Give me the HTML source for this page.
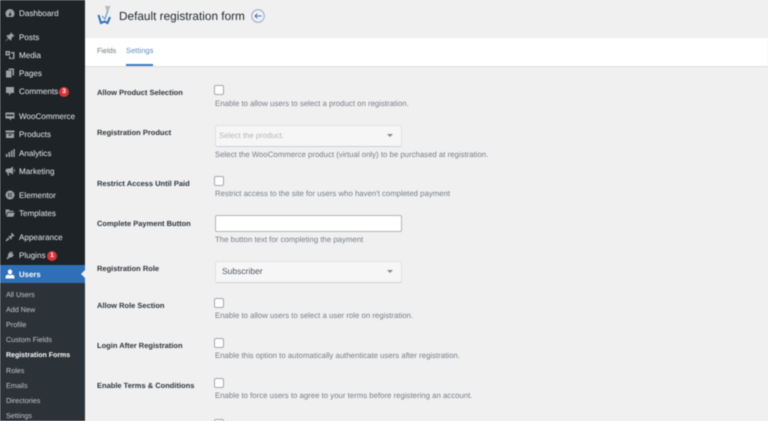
<!DOCTYPE html>
<html><head><meta charset="utf-8"><style>
html,body{margin:0;padding:0;width:768px;height:421px;overflow:hidden;background:#f0f0f1;font-family:"Liberation Sans",sans-serif;text-rendering:geometricPrecision}
#wrap{position:relative;width:768px;height:421px;overflow:hidden;filter:blur(.45px)}
.a{position:absolute;white-space:nowrap;line-height:12px}
.m{left:19px;font-size:8.1px;color:#e8eaec}
.s{left:6px;font-size:7.2px;color:#c0c4c7}
.l{left:97px;font-size:7.5px;font-weight:bold;color:#2c3338}
.d{left:215px;font-size:7.8px;color:#787e84}
.c{position:absolute;left:214px;width:8px;height:8px;border:1px solid #a4a7ab;border-radius:2px;background:#fff}
.ic{position:absolute;left:5px;width:10px;height:10px;fill:#9da1a5}
.sel{position:absolute;left:215px;width:185px;height:20px;border:1px solid #e0e0e1;border-bottom-color:#cfcfd1;border-radius:2px;background:#f6f6f7}
.tri{position:absolute;left:387px;width:0;height:0;border:3px solid transparent;border-top:3px solid #888;border-bottom:0}
.badge{position:absolute;border-radius:50%;background:#d63638;color:#fff;font-size:6.5px;font-weight:bold;text-align:center;width:10px;height:10px;line-height:10px}
</style></head><body><div id="wrap">
<div style="position:absolute;left:0;top:0;width:85px;height:421px;background:#1d2327"></div>
<div style="position:absolute;left:0;top:283px;width:85px;height:138px;background:#2c3338"></div>
<div style="position:absolute;left:0;top:265px;width:85px;height:18px;background:#2f6fb7"></div>
<div style="position:absolute;left:81px;top:270px;width:0;height:0;border:4px solid transparent;border-right:4px solid #f0f0f1;border-left:0"></div>

<svg class="ic" style="top:8px" viewBox="0 0 10 10"><path d="M5 1a4.500 4.500 0 0 0-4.500 4.500c0 1.300.5 2.500 1.300 3.500h6.400c.8-1 1.300-2.200 1.300-3.500A4.500 4.500 0 0 0 5 1zm0 7a1.200 1.200 0 0 1-.5-2.300L6 3l-.3 2.800A1.200 1.200 0 0 1 5 8z"/></svg>
<svg class="ic" style="top:32px" viewBox="0 0 10 10"><path d="M6 .5l3.500 3.500-1 .5-.5-.3L6.300 6.500l.2 1.500-1 .5L3.500 6.500.8 9.500.5 9.200 3 6 1.500 4l.5-1 1.500.2L5.800 1.500 5.500 1z"/></svg>
<svg class="ic" style="top:50px" viewBox="0 0 10 10"><path d="M.5 1h4.500v4.500H.5zM2 2.500v1.500h1.500V2.500zM6 2h3.500v7H4V6.500h1.500V8H8V3.500H6z" fill-rule="evenodd"/></svg>
<svg class="ic" style="top:68px" viewBox="0 0 10 10"><path d="M3.500.5H9v7H7.500V2H3.500zM1 2.500h5.500v7H1z"/></svg>
<svg class="ic" style="top:86px" viewBox="0 0 10 10"><path d="M1 1h8v6H6L4 9.500V7H1z"/></svg>
<svg class="ic" style="top:111px" viewBox="0 0 10 10"><path d="M.5 1.500h9v6h-9zM4 7.500L6 9.500V7.500z"/><rect x="1.500" y="3.500" width="7" height="1.500" fill="#1d2327"/></svg>
<svg class="ic" style="top:129px" viewBox="0 0 10 10"><path d="M.5 1.500h9v2h-9zM1 4.500h8v4.500H1zM3.500 5.500v1h3v-1z" fill-rule="evenodd"/></svg>
<svg class="ic" style="top:148px" viewBox="0 0 10 10"><path d="M.8 6h1.700v3H.8zM3.400 4h1.700v5H3.400zM6 2.500h1.500V9H6zM8.300 1h1.500v8H8.300z"/></svg>
<svg class="ic" style="top:166px" viewBox="0 0 10 10"><path d="M8 .5v8L5 6.700H3.500l.8 2.800H3L2 6.500C1 6.300.5 5.500.5 4.500S1.500 2.500 3 2.500h2zM9 3h.8v3H9z"/></svg>
<svg class="ic" style="top:190px" viewBox="0 0 10 10"><path d="M5 .5a4.500 4.500 0 1 0 0 9 4.500 4.500 0 0 0 0-9zM3.200 3h1v4h-1zM5 3h2v.8H5zM5 4.600h2v.8H5zM5 6.200h2V7H5z" fill-rule="evenodd"/></svg>
<svg class="ic" style="top:208px" viewBox="0 0 10 10"><path d="M.5 1.500h3.500l1 1.200H8.500v1.200H2.500L1 8zM3 4.700h6.800L8.300 8.700H1.500z"/></svg>
<svg class="ic" style="top:232px" viewBox="0 0 10 10"><path d="M6.500.5l3 3-1 1-.7-.3-1.300 1.300.5 1-1 1L3.300 4.800l1-1 1 .5 1.200-1.300-.3-.7zM2.800 5.500L4.500 7.200 1 9.500.5 9z"/></svg>
<svg class="ic" style="top:250px" viewBox="0 0 10 10"><path d="M5.500 1v2L7 1.500l1 1L6.500 4h2v1.500L6.500 7.500H4.500L2.500 9.500 1.500 8.500 3 6.500V4.500z"/></svg>
<svg class="ic" style="top:269px;fill:#fff" viewBox="0 0 10 10"><path d="M5 .5a2.200 2.200 0 0 1 2.200 2.300C7.200 4.200 6.200 5.500 5 5.500S2.800 4.200 2.800 2.800A2.200 2.200 0 0 1 5 .5zM3 5.500c.6.500 1.300.8 2 .8s1.400-.3 2-.8c1.500.3 2.500 1.200 2.500 2.500v1.500H.5V8C.5 6.700 1.500 5.800 3 5.500z"/></svg>

<div class="a m" style="top:8px">Dashboard</div>
<div class="a m" style="top:32px">Posts</div>
<div class="a m" style="top:50px">Media</div>
<div class="a m" style="top:68px">Pages</div>
<div class="a m" style="top:86px">Comments</div>
<div class="badge" style="left:59px;top:87px">3</div>
<div class="a m" style="top:111px">WooCommerce</div>
<div class="a m" style="top:129px">Products</div>
<div class="a m" style="top:148px">Analytics</div>
<div class="a m" style="top:166px">Marketing</div>
<div class="a m" style="top:190px">Elementor</div>
<div class="a m" style="top:208px">Templates</div>
<div class="a m" style="top:232px">Appearance</div>
<div class="a m" style="top:250px">Plugins</div>
<div class="badge" style="left:47px;top:251px">1</div>
<div class="a m" style="top:269px;color:#fff;font-weight:bold;font-size:7.800px">Users</div>
<div class="a s" style="top:289px">All Users</div>
<div class="a s" style="top:304px">Add New</div>
<div class="a s" style="top:319px">Profile</div>
<div class="a s" style="top:334px">Custom Fields</div>
<div class="a s" style="top:350px;color:#fff;font-weight:bold;font-size:7px">Registration Forms</div>
<div class="a s" style="top:365px">Roles</div>
<div class="a s" style="top:380px">Emails</div>
<div class="a s" style="top:395px">Directories</div>
<div class="a s" style="top:410px">Settings</div>

<svg style="position:absolute;left:96px;top:5px;width:17px;height:21px" viewBox="0 0 17 21"><path d="M2.500 10l2.500 8 3.500-1.500 3 1.500 2.500-6" fill="none" stroke="#2f6fb7" stroke-width="2"/><path d="M6 11l3 3 3-9" fill="none" stroke="#6f9acb" stroke-width="1.200"/><path d="M9 1h5.500l-2 4.500h-2z" fill="#b5b8bb"/></svg>
<div class="a" style="left:119px;top:9px;font-size:11.800px;line-height:15px;color:#23282d">Default registration form</div>
<svg style="position:absolute;left:251px;top:9px;width:14px;height:14px" viewBox="0 0 14 14"><circle cx="7" cy="7" r="6.300" fill="none" stroke="#7f9cc3" stroke-width=".8"/><path d="M10.500 7H4M6.300 4.700L4 7l2.300 2.300" fill="none" stroke="#3f79bf" stroke-width="1"/></svg>

<div style="position:absolute;left:85px;top:38px;width:683px;height:28px;background:#fff;border-bottom:1px solid #dcdcde"></div>
<div class="a" style="left:97px;top:45px;font-size:7.200px;color:#70767c">Fields</div>
<div class="a" style="left:126px;top:45px;font-size:7.600px;color:#5f8cc2">Settings</div>
<div style="position:absolute;left:126px;top:63.500px;width:27px;height:2.500px;background:#3f79bf"></div>

<div class="a l" style="top:87px">Allow Product Selection</div>
<div class="c" style="top:85px"></div>
<div class="a d" style="top:98px">Enable to allow users to select a product on registration.</div>

<div class="a l" style="top:127px">Registration Product</div>
<div class="sel" style="top:125px"></div>
<div class="a" style="left:219px;top:130px;font-size:7.800px;color:#b4b7bb">Select the product.</div>
<div class="tri" style="top:134px"></div>
<div class="a d" style="top:149px">Select the WooCommerce product (virtual only) to be purchased at registration.</div>

<div class="a l" style="top:178px">Restrict Access Until Paid</div>
<div class="c" style="top:176px"></div>
<div class="a d" style="top:188px">Restrict access to the site for users who haven't completed payment</div>

<div class="a l" style="top:218px">Complete Payment Button</div>
<div style="position:absolute;left:215px;top:215px;width:185px;height:15px;background:#fff;border:1px solid #b0b3b6;border-radius:2px"></div>
<div class="a d" style="top:234px">The button text for completing the payment</div>

<div class="a l" style="top:263px">Registration Role</div>
<div class="sel" style="top:261px"></div>
<div class="a" style="left:222px;top:265px;font-size:8.500px;color:#50575e">Subscriber</div>
<div class="tri" style="top:270px"></div>

<div class="a l" style="top:300px">Allow Role Section</div>
<div class="c" style="top:298px"></div>
<div class="a d" style="top:310px">Enable to allow users to select a user role on registration.</div>

<div class="a l" style="top:340px">Login After Registration</div>
<div class="c" style="top:338px"></div>
<div class="a d" style="top:350px">Enable this option to automatically authenticate users after registration.</div>

<div class="a l" style="top:380px">Enable Terms &amp; Conditions</div>
<div class="c" style="top:378px"></div>
<div class="a d" style="top:390px">Enable to force users to agree to your terms before registering an account.</div>
<div class="c" style="top:419px"></div>
</div></body></html>
